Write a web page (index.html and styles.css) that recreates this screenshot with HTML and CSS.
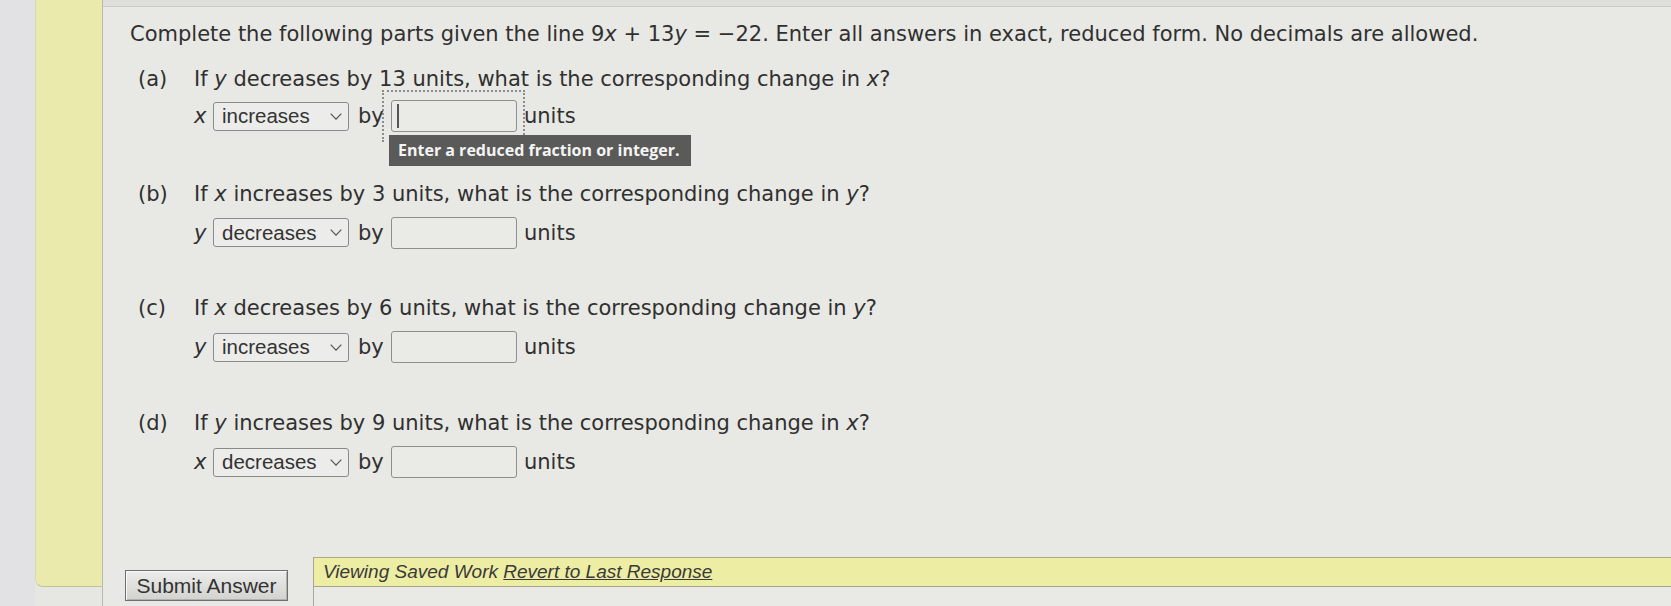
FILE: index.html
```html
<!DOCTYPE html>
<html lang="en">
<head>
<meta charset="utf-8">
<title>Linear change question</title>
<link rel="stylesheet" href="styles.css">
</head>
<body>
<div class="page">
  <div class="strip"></div>
  <div class="side"></div>
  <div class="main">
    <div class="topband"></div>
    <p class="intro">Complete the following parts given the line 9<i>x</i> + 13<i>y</i> = −22. Enter all answers in exact, reduced form. No decimals are allowed.</p>
    <ol class="parts">
      <li class="part">
        <span class="lbl">(a)</span>
        <div class="body">
          <p class="q">If <i>y</i> decreases by 13 units, what is the corresponding change in <i>x</i>?</p>
          <div class="row row-first">
            <i class="var">x</i>
            <span class="sel">increases<svg class="chev" viewBox="0 0 12 7" width="12" height="7"><path d="M0.7 0.7 L6 6.2 L11.3 0.7" fill="none" stroke="#555" stroke-width="1.2"/></svg></span>
            <span class="by">by</span>
            <span class="field focus"><span class="inp"><span class="caret"></span></span><span class="tip">Enter a reduced fraction or integer.</span></span>
            <span class="units">units</span>
          </div>
        </div>
      </li>
      <li class="part">
        <span class="lbl">(b)</span>
        <div class="body">
          <p class="q">If <i>x</i> increases by 3 units, what is the corresponding change in <i>y</i>?</p>
          <div class="row">
            <i class="var">y</i>
            <span class="sel">decreases<svg class="chev" viewBox="0 0 12 7" width="12" height="7"><path d="M0.7 0.7 L6 6.2 L11.3 0.7" fill="none" stroke="#555" stroke-width="1.2"/></svg></span>
            <span class="by">by</span>
            <span class="field"><span class="inp"></span></span>
            <span class="units">units</span>
          </div>
        </div>
      </li>
      <li class="part">
        <span class="lbl">(c)</span>
        <div class="body">
          <p class="q">If <i>x</i> decreases by 6 units, what is the corresponding change in <i>y</i>?</p>
          <div class="row">
            <i class="var">y</i>
            <span class="sel">increases<svg class="chev" viewBox="0 0 12 7" width="12" height="7"><path d="M0.7 0.7 L6 6.2 L11.3 0.7" fill="none" stroke="#555" stroke-width="1.2"/></svg></span>
            <span class="by">by</span>
            <span class="field"><span class="inp"></span></span>
            <span class="units">units</span>
          </div>
        </div>
      </li>
      <li class="part">
        <span class="lbl">(d)</span>
        <div class="body">
          <p class="q">If <i>y</i> increases by 9 units, what is the corresponding change in <i>x</i>?</p>
          <div class="row">
            <i class="var">x</i>
            <span class="sel">decreases<svg class="chev" viewBox="0 0 12 7" width="12" height="7"><path d="M0.7 0.7 L6 6.2 L11.3 0.7" fill="none" stroke="#555" stroke-width="1.2"/></svg></span>
            <span class="by">by</span>
            <span class="field"><span class="inp"></span></span>
            <span class="units">units</span>
          </div>
        </div>
      </li>
    </ol>
    <div class="footer">
      <button class="submit" type="button">Submit Answer</button>
      <div class="resp">
        <div class="resp-bar">Viewing Saved Work <a class="revert" href="#">Revert to Last Response</a></div>
      </div>
    </div>
  </div>
</div>
</body>
</html>
```
FILE: styles.css
```css
html, body {
  margin: 0;
  padding: 0;
  background: #e6e6e2;
}
.page {
  display: flex;
  height: 606px;
  overflow: hidden;
  font-family: "DejaVu Sans", Verdana, sans-serif;
  color: #303030;
}
.strip {
  width: 35px;
  flex: none;
  background: #e2e1e4;
}
.side {
  width: 67px;
  height: 587px;
  flex: none;
  box-sizing: border-box;
  background: #ebeaad;
  border-left: 1px solid #d8d7b4;
  border-bottom: 1px solid #c3c29c;
  border-bottom-left-radius: 8px;
}
.main {
  flex: 1;
  border-left: 1px solid #b8b8b1;
  padding-left: 10px;
  background: #e8e8e4;
}
.topband {
  height: 6px;
  margin-left: -10px;
  background: #dededb;
  border-bottom: 1px solid #c9c9c5;
}
.intro {
  margin: 15px 0 0 17px;
  font-size: 21px;
  line-height: 24px;
  white-space: nowrap;
}
.parts {
  list-style: none;
  margin: 21px 0 0 25px;
  padding: 0;
}
.part {
  display: grid;
  grid-template-columns: 56px 1fr;
  font-size: 21px;
  line-height: 24px;
}
.part + .part {
  margin-top: 46.7px;
}
.q {
  margin: 0;
  white-space: nowrap;
}
.row {
  display: flex;
  align-items: center;
  height: 34px;
  margin-top: 10px;
}
.row-first {
  margin-top: 8px;
  margin-bottom: 2px;
}
.var {
  width: 19px;
}
.sel {
  display: flex;
  align-items: center;
  justify-content: space-between;
  box-sizing: border-box;
  width: 136px;
  height: 29px;
  padding: 0 6px 0 8px;
  border: 1px solid #8a8a86;
  border-radius: 3px;
  background: #ececea;
  font-family: "Liberation Sans", Arial, sans-serif;
  font-size: 20.5px;
  color: #333;
}
.by {
  margin-left: 9px;
  width: 33px;
}
.field {
  position: relative;
  display: block;
  width: 126px;
  height: 32px;
}
.inp {
  display: block;
  box-sizing: border-box;
  width: 126px;
  height: 32px;
  border: 1px solid #8e8e8a;
  border-radius: 3px;
  background: #eaeae7;
  position: relative;
}
.caret {
  position: absolute;
  left: 5px;
  top: 3px;
  width: 2px;
  height: 24px;
  background: #555;
}
.focus::before {
  content: "";
  position: absolute;
  left: -9px;
  top: -10px;
  right: -8px;
  bottom: -10px;
  border: 2px dotted #8c8c8c;
  border-bottom: none;
  pointer-events: none;
}
.tip {
  position: absolute;
  left: -2px;
  top: 35px;
  width: 302px;
  height: 31px;
  box-sizing: border-box;
  padding-left: 9px;
  background: #5a5a59;
  color: #f4f4f4;
  font-family: "Open Sans", sans-serif;
  font-weight: 700;
  font-size: 16px;
  line-height: 31px;
  white-space: nowrap;
  z-index: 2;
}
.units {
  margin-left: 7px;
}
.footer {
  display: flex;
  align-items: flex-start;
  margin-top: 78px;
}
.submit {
  margin: 13px 0 0 12px;
  width: 163px;
  height: 31px;
  padding: 0;
  border: 1px solid #6f6f6f;
  border-radius: 0;
  background: linear-gradient(#ececea, #d2d2cf);
  box-shadow: inset 1px 1px 0 #f8f8f8, inset -1px -1px 0 #b0b0ad;
  font-family: "Liberation Sans", Arial, sans-serif;
  font-size: 21px;
  color: #333;
}
.resp {
  flex: 1;
  margin-left: 25px;
  height: 80px;
  border-left: 1px solid #a8a89a;
  border-top: 1px solid #a9a98c;
  background: #e9e9e5;
}
.resp-bar {
  height: 29px;
  box-sizing: border-box;
  padding-left: 9px;
  background: #ededa4;
  border-bottom: 1px solid #a5a58a;
  font-family: "Liberation Sans", Arial, sans-serif;
  font-style: italic;
  font-size: 19px;
  line-height: 27px;
  color: #3a3a3a;
}
.revert {
  color: #3a3a3a;
  text-decoration: underline;
}
```
